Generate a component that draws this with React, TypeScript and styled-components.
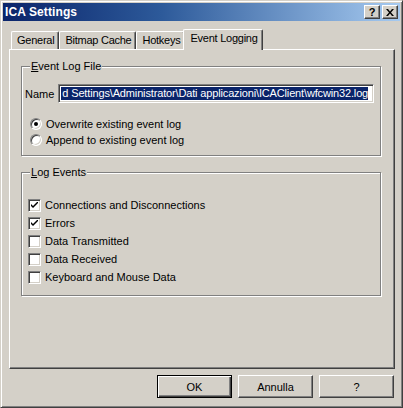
import React from "react";
import styled, { createGlobalStyle } from "styled-components";

const Global = createGlobalStyle`
  html, body { margin: 0; padding: 0; background: #d4d0c8; }
  body { font-family: "Liberation Sans", Arial, sans-serif; font-size: 11px; color: #000; }
  * { box-sizing: border-box; }
`;

const Window = styled.div`
  width: 403px;
  height: 408px;
  background: #d4d0c8;
  border: 1px solid;
  border-color: #d4d0c8 #404040 #404040 #d4d0c8;
  box-shadow: inset 1px 1px 0 #fff, inset -1px -1px 0 #808080;
  padding: 2px;
  display: flex;
  flex-direction: column;
`;

const TitleBar = styled.div`
  height: 18px;
  flex: none;
  display: flex;
  align-items: center;
  padding: 0 2px 0 2px;
  background: linear-gradient(to right, #0a246a 0%, #2d5a9a 40%, #a6caf0 100%);
`;

const TitleText = styled.div`
  flex: 1;
  color: #fff;
  font-weight: bold;
  font-size: 12px;
  letter-spacing: 0.1px;
`;

const TitleButton = styled.div<{ $gap?: number }>`
  width: 16px;
  height: 14px;
  margin-left: ${(p) => p.$gap ?? 0}px;
  background: #d4d0c8;
  border: 1px solid;
  border-color: #fff #404040 #404040 #fff;
  box-shadow: inset -1px -1px 0 #808080;
  display: flex;
  align-items: center;
  justify-content: center;
  font-weight: bold;
  font-size: 11px;
  line-height: 1;
  color: #000;
`;

const Body = styled.div`
  flex: 1;
  display: flex;
  flex-direction: column;
  padding: 8px 5px 7px 6px;
`;

const TabStrip = styled.div`
  height: 20px;
  display: flex;
  align-items: flex-end;
  padding-left: 2px;
  position: relative;
  z-index: 1;
`;

const Tab = styled.div<{ $active?: boolean }>`
  height: ${(p) => (p.$active ? 21 : 18)}px;
  margin: ${(p) => (p.$active ? "0 -2px -1px -2px" : "0")};
  padding: ${(p) => (p.$active ? "0 4px 4px 6px" : "0 4px 1px 5px")};
  background: #d4d0c8;
  border-left: 1px solid #fff;
  border-top: 1px solid #fff;
  border-right: 1px solid #404040;
  border-radius: 2px 2px 0 0;
  box-shadow: inset -1px 0 0 #808080;
  display: flex;
  align-items: center;
  white-space: nowrap;
  letter-spacing: -0.25px;
  position: relative;
  z-index: ${(p) => (p.$active ? 2 : 1)};
`;

const Panel = styled.div`
  height: 320px;
  border: 1px solid;
  border-color: #fff #404040 #404040 #fff;
  box-shadow: inset -1px -1px 0 #808080;
  padding: 10px 13px 0 11px;
  display: flex;
  flex-direction: column;
  gap: 10px;
`;

const Group = styled.fieldset<{ $h: number }>`
  margin: 0;
  height: ${(p) => p.$h}px;
  border: 1px solid #808080;
  box-shadow: inset 1px 1px 0 #fff, 1px 1px 0 #fff;
  padding: 0 6px 0 3px;
  min-width: 0;
`;

const Legend = styled.legend`
  padding: 0 1px;
  margin-left: 5px;
  line-height: 13px;
  background: #d4d0c8;
  position: relative;
  z-index: 1;
`;

const Access = styled.span`
  text-decoration: underline;
`;

const NameRow = styled.div`
  display: flex;
  align-items: center;
  gap: 4px;
  margin-top: 11px;
`;

const TextBox = styled.div`
  flex: 1;
  height: 19px;
  background: #fff;
  border: 1px solid;
  border-color: #808080 #fff #fff #808080;
  box-shadow: inset 1px 1px 0 #404040, inset -1px -1px 0 #d4d0c8;
  padding: 2px;
  display: flex;
  overflow: hidden;
`;

const Selection = styled.span`
  background: #0a246a;
  color: #fff;
  white-space: nowrap;
  line-height: 13px;
  padding-left: 1px;
  letter-spacing: -0.15px;
`;

const OptionList = styled.div<{ $top: number; $row: number }>`
  display: flex;
  flex-direction: column;
  margin-top: ${(p) => p.$top}px;
  & > * { height: ${(p) => p.$row}px; }
`;

const Option = styled.label<{ $indent: number }>`
  display: flex;
  align-items: center;
  gap: 4px;
  padding-left: ${(p) => p.$indent}px;
  white-space: nowrap;
`;

const Radio = styled.span<{ $on?: boolean }>`
  width: 12px;
  height: 12px;
  border-radius: 50%;
  background: #fff;
  border: 1px solid;
  border-color: #808080 #fff #fff #808080;
  box-shadow: inset 1px 1px 0 #404040, inset -1px -1px 0 #d4d0c8;
  display: flex;
  align-items: center;
  justify-content: center;
  &::after {
    content: "";
    width: 4px;
    height: 4px;
    border-radius: 50%;
    background: ${(p) => (p.$on ? "#000" : "transparent")};
  }
`;

const Check = styled.span`
  width: 13px;
  height: 13px;
  background: #fff;
  border: 1px solid;
  border-color: #808080 #fff #fff #808080;
  box-shadow: inset 1px 1px 0 #404040, inset -1px -1px 0 #d4d0c8;
  display: flex;
  align-items: center;
  justify-content: center;
`;

const ButtonRow = styled.div`
  display: flex;
  justify-content: flex-end;
  gap: 6px;
  margin-top: 6px;
  padding-right: 1px;
`;

const Button = styled.div<{ $default?: boolean }>`
  width: 75px;
  height: 23px;
  background: #d4d0c8;
  border: 1px solid;
  border-color: ${(p) => (p.$default ? "#000" : "#fff #404040 #404040 #fff")};
  box-shadow: ${(p) =>
    p.$default
      ? "inset 1px 1px 0 #fff, inset -1px -1px 0 #404040, inset -2px -2px 0 #808080"
      : "inset -1px -1px 0 #808080"};
  display: flex;
  align-items: center;
  justify-content: center;
`;

const CheckMark = () => (
  <svg width="7" height="7" viewBox="0 0 7 7">
    <path d="M0 2 L0 4 L2 6 L7 1 L7 -1 L2 4 Z" fill="#000" />
  </svg>
);

const CloseGlyph = () => (
  <svg width="8" height="7" viewBox="0 0 8 7">
    <path d="M0 0 H2 L4 2.5 L6 0 H8 L5 3.5 L8 7 H6 L4 4.5 L2 7 H0 L3 3.5 Z" fill="#000" />
  </svg>
);

const events = [
  { label: "Connections and Disconnections", on: true },
  { label: "Errors", on: true },
  { label: "Data Transmitted", on: false },
  { label: "Data Received", on: false },
  { label: "Keyboard and Mouse Data", on: false },
];

export default function App() {
  return (
    <>
      <Global />
      <Window>
        <TitleBar>
          <TitleText>ICA Settings</TitleText>
          <TitleButton>?</TitleButton>
          <TitleButton $gap={2}>
            <CloseGlyph />
          </TitleButton>
        </TitleBar>
        <Body>
          <TabStrip>
            <Tab>General</Tab>
            <Tab>Bitmap Cache</Tab>
            <Tab>Hotkeys</Tab>
            <Tab $active>Event Logging</Tab>
          </TabStrip>
          <Panel>
            <Group $h={96}>
              <Legend>
                <Access>E</Access>vent Log File
              </Legend>
              <NameRow>
                <span>Name</span>
                <TextBox>
                  <Selection>d Settings\Administrator\Dati applicazioni\ICAClient\wfcwin32.log</Selection>
                </TextBox>
              </NameRow>
              <OptionList $top={13} $row={16}>
                <Option $indent={5}>
                  <Radio $on />
                  Overwrite existing event log
                </Option>
                <Option $indent={5}>
                  <Radio />
                  Append to existing event log
                </Option>
              </OptionList>
            </Group>
            <Group $h={130}>
              <Legend>
                <Access>L</Access>og Events
              </Legend>
              <OptionList $top={17} $row={18}>
                {events.map((e) => (
                  <Option key={e.label} $indent={3}>
                    <Check>{e.on && <CheckMark />}</Check>
                    {e.label}
                  </Option>
                ))}
              </OptionList>
            </Group>
          </Panel>
          <ButtonRow>
            <Button $default>OK</Button>
            <Button>Annulla</Button>
            <Button>?</Button>
          </ButtonRow>
        </Body>
      </Window>
    </>
  );
}
